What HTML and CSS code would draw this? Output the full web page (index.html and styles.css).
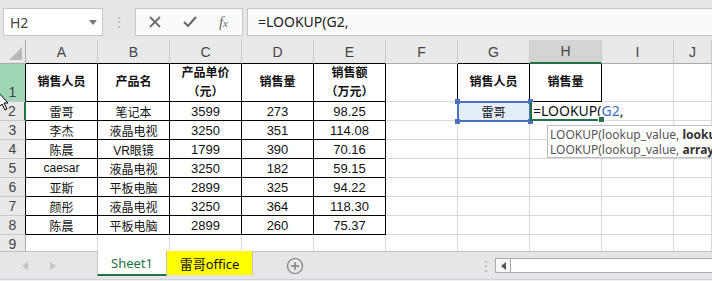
FILE: index.html
```html
<!DOCTYPE html>
<html lang="zh">
<head>
    <meta charset="UTF-8">
    <title>LOOKUP</title>
    <link rel="stylesheet" href="styles.css">
</head>
<body>
<div class="app">

    <!-- barre de formule -->
    <div class="formula-bar">
        <div class="name-box">
            <span>H2</span>
            <svg width="8" height="5" viewBox="0 0 8 5"><path d="M0 0h8L4 5z" fill="#7a7a7a"/></svg>
        </div>
        <div class="grip">&#8942;</div>
        <div class="fx-buttons">
            <svg width="12" height="12" viewBox="0 0 12 12"><path d="M1 1l10 10M11 1L1 11" stroke="#6b6b6b" stroke-width="1.8"/></svg>
            <svg width="14" height="12" viewBox="0 0 14 12"><path d="M1 6l4 4 8-9" stroke="#6b6b6b" stroke-width="2.2" fill="none"/></svg>
            <span class="fx">f<i>x</i></span>
        </div>
        <div class="formula-input">=LOOKUP(G2,</div>
    </div>

    <!-- feuille -->
    <div class="sheet">
        <div class="grid">
            <div class="corner"></div>
            <div class="hd tb">A</div>
            <div class="hd tb">B</div>
            <div class="hd tb">C</div>
            <div class="hd tb">D</div>
            <div class="hd tb">E</div>
            <div class="hd">F</div>
            <div class="hd tb">G</div>
            <div class="hd on">H</div>
            <div class="hd">I</div>
            <div class="hd">J</div>

            <div class="rh tl r1">1</div>
            <div class="t b z">销售人员</div>
            <div class="t b z">产品名</div>
            <div class="t b z"><span>产品单价</span><span>（元）</span></div>
            <div class="t b z">销售量</div>
            <div class="t b z"><span>销售额</span><span>（万元）</span></div>
            <div class="rb"></div>
            <div class="t b z">销售人员</div>
            <div class="t b z">销售量</div>
            <div></div>
            <div></div>

            <div class="rh tl act">2</div>
            <div class="t z">雷哥</div>
            <div class="t z">笔记本</div>
            <div class="t">3599</div>
            <div class="t">273</div>
            <div class="t">98.25</div>
            <div></div>
            <div class="ref z">雷哥<span class="sq s1"></span><span class="sq s2"></span><span class="sq s3"></span><span class="sq s4"></span></div>
            <div class="edit"><span>=LOOKUP(<em>G2</em>,</span></div>
            <div></div>
            <div></div>

            <div class="rh tl">3</div>
            <div class="t z">李杰</div>
            <div class="t z">液晶电视</div>
            <div class="t">3250</div>
            <div class="t">351</div>
            <div class="t">114.08</div>
            <div></div><div></div><div></div><div></div><div></div>

            <div class="rh tl">4</div>
            <div class="t z">陈晨</div>
            <div class="t z">VR眼镜</div>
            <div class="t">1799</div>
            <div class="t">390</div>
            <div class="t">70.16</div>
            <div></div><div></div><div></div><div></div><div></div>

            <div class="rh tl">5</div>
            <div class="t z">caesar</div>
            <div class="t z">液晶电视</div>
            <div class="t">3250</div>
            <div class="t">182</div>
            <div class="t">59.15</div>
            <div></div><div></div><div></div><div></div><div></div>

            <div class="rh tl">6</div>
            <div class="t z">亚斯</div>
            <div class="t z">平板电脑</div>
            <div class="t">2899</div>
            <div class="t">325</div>
            <div class="t">94.22</div>
            <div></div><div></div><div></div><div></div><div></div>

            <div class="rh tl">7</div>
            <div class="t z">颜彤</div>
            <div class="t z">液晶电视</div>
            <div class="t">3250</div>
            <div class="t">364</div>
            <div class="t">118.30</div>
            <div></div><div></div><div></div><div></div><div></div>

            <div class="rh tl">8</div>
            <div class="t z">陈晨</div>
            <div class="t z">平板电脑</div>
            <div class="t">2899</div>
            <div class="t">260</div>
            <div class="t">75.37</div>
            <div></div><div></div><div></div><div></div><div></div>

            <div class="rh">9</div>
            <div></div><div></div><div></div><div></div><div></div>
            <div></div><div></div><div></div><div></div><div></div>
        </div>

        <div class="tip">
            <div>LOOKUP(lookup_value, <b>lookup_vector</b>, [result_vector])</div>
            <div>LOOKUP(lookup_value, <b>array</b>)</div>
        </div>

        <svg class="cursor" width="12" height="20" viewBox="0 0 12 20"><path d="M1 1v14l3-3 3 6 2-1-3-6h4z" fill="#fff" stroke="#000" stroke-width="1"/></svg>
    </div>

    <!-- onglets -->
    <div class="tabs">
        <div class="nav">
            <svg width="6" height="8" viewBox="0 0 6 8"><path d="M6 0v8L0 4z" fill="#c4c4c4"/></svg>
            <svg width="6" height="8" viewBox="0 0 6 8"><path d="M0 0v8l6-4z" fill="#c4c4c4"/></svg>
        </div>
        <div class="tab active">Sheet1</div>
        <div class="tab yellow">雷哥office</div>
        <div class="add">
            <svg width="18" height="18" viewBox="0 0 18 18"><circle cx="9" cy="9" r="7.5" fill="none" stroke="#7d7d7d" stroke-width="1.2"/><path d="M9 5v8M5 9h8" stroke="#7d7d7d" stroke-width="1.4"/></svg>
        </div>
        <div class="dots">&#8942;</div>
        <div class="scroll-left">
            <svg width="5" height="8" viewBox="0 0 5 8"><path d="M5 0v8L0 4z" fill="#555"/></svg>
        </div>
        <div class="scroll-track"></div>
    </div>

</div>
</body>
</html>
```

FILE: styles.css
```css
body {
    margin: 0;
    padding: 0;
    background-color: #fff;
}
.app {
    width: 712px;
    height: 281px;
    overflow: hidden;
    position: relative;
    font-family: "Noto Sans", "Noto Sans CJK SC", sans-serif;
    background-color: #f0f0f0;
}
/* barre de formule */
.formula-bar {
    height: 40px;
    box-sizing: border-box;
    padding: 8px 0 0 3px;
    background-color: #e6e6e6;
    display: flex;
    align-items: flex-start;
}
.name-box {
    width: 100px;
    height: 28px;
    box-sizing: border-box;
    border: 1px solid #c6c6c6;
    background-color: #fff;
    display: flex;
    align-items: center;
    justify-content: space-between;
    padding: 0 5px 0 6px;
    font-size: 14px;
    color: #444;
}
.grip {
    width: 32px;
    text-align: center;
    line-height: 28px;
    color: #b5b5b5;
    font-size: 14px;
}
.fx-buttons {
    width: 108px;
    height: 28px;
    box-sizing: border-box;
    border: 1px solid #c6c6c6;
    background-color: #fafafa;
    display: flex;
    align-items: center;
    justify-content: space-between;
    padding: 0 14px 0 13px;
}
.fx {
    font-family: "Liberation Serif", serif;
    font-style: italic;
    font-size: 15px;
    color: #666;
}
.fx i {
    font-size: 11px;
}
.formula-input {
    flex: 1;
    height: 28px;
    margin-left: 4px;
    box-sizing: border-box;
    border: 1px solid #c6c6c6;
    border-right: none;
    background-color: #fafafa;
    padding-left: 10px;
    font-size: 14px;
    line-height: 25px;
    color: #222;
}
/* feuille */
.sheet {
    position: relative;
    height: 211px;
    overflow: hidden;
    background-color: #fff;
}
.grid {
    display: grid;
    grid-template-columns: 26px repeat(9, 72px) 1fr;
    grid-template-rows: 24px 38px repeat(8, 19px);
    font-family: "Liberation Sans", "Noto Sans CJK SC", sans-serif;
    font-size: 13px;
    color: #111;
}
.grid > div {
    box-sizing: border-box;
    border-right: 1px solid #d9d9d9;
    border-bottom: 1px solid #d9d9d9;
    display: flex;
    align-items: center;
    justify-content: center;
    white-space: nowrap;
}
.corner {
    background-color: #e9e9e9;
    border-right-color: #ababab !important;
    border-bottom-color: #ababab !important;
    align-items: flex-end !important;
    justify-content: flex-end !important;
    padding: 0 3px 3px 0;
}
.corner::after {
    content: "";
    border-style: solid;
    border-width: 0 0 13px 13px;
    border-color: transparent transparent #b8b8b8 transparent;
}
.hd {
    background-color: #e9e9e9;
    border-right-color: #c9c9c9 !important;
    border-bottom-color: #ababab !important;
    font-size: 14px;
    color: #444;
}
.hd.tb {
    border-bottom-color: #000 !important;
}
.hd.on {
    background-color: #d4d4d4;
    border-bottom: 2px solid #217346 !important;
}
.rh {
    background-color: #e9e9e9;
    border-right-color: #ababab !important;
    border-bottom-color: #c9c9c9 !important;
    align-items: flex-end !important;
    font-size: 14px;
    line-height: 17px;
    color: #444;
}
.rh.tl {
    border-right-color: #000 !important;
}
.rh.r1 {
    background-color: #9fd5b7;
}
.rh.act {
    border-right: 2px solid #217346 !important;
}
.t {
    border-right-color: #000 !important;
    border-bottom-color: #000 !important;
}
.rb {
    border-right-color: #000 !important;
}
.z {
    font-size: 12px;
}
.b {
    font-weight: bold;
    flex-direction: column;
    line-height: 19px;
}
/* G2 : référence en bleu */
.ref {
    position: relative;
    background-color: #e4eef9;
}
.ref::before {
    content: "";
    position: absolute;
    left: -1px;
    top: -1px;
    right: -2px;
    bottom: -2px;
    border: 2px solid #4a72c0;
}
.sq {
    position: absolute;
    width: 5px;
    height: 5px;
    background-color: #4a72c0;
}
.s1 { left: -3px; top: -3px; }
.s2 { right: -4px; top: -3px; }
.s3 { left: -3px; bottom: -4px; }
.s4 { right: -4px; bottom: -4px; }
/* H2 : cellule en édition */
.edit {
    position: relative;
    z-index: 1;
    justify-content: flex-start !important;
    border-left: 2px solid #217346;
    border-bottom: 2px solid #217346 !important;
    border-right: none !important;
}
.edit span {
    background-color: #fff;
    font-family: "Noto Sans", sans-serif;
    font-size: 14px;
    line-height: 17px;
    padding: 0 3px 0 1px;
    color: #111;
}
.edit em {
    font-style: normal;
    color: #3e6fc4;
}
.edit::after {
    content: "";
    position: absolute;
    right: -3px;
    bottom: -4px;
    width: 5px;
    height: 5px;
    background-color: #217346;
    border: 1px solid #fff;
}
.tip {
    position: absolute;
    left: 547px;
    top: 85px;
    z-index: 3;
    height: 33px;
    box-sizing: border-box;
    border: 1px solid #bdbdbd;
    background-color: #fff;
    padding: 1px 6px 0 2px;
    font-size: 12px;
    line-height: 15px;
    color: #555;
    white-space: nowrap;
}
.tip b {
    color: #333;
}
.cursor {
    position: absolute;
    left: -2px;
    top: 52px;
}
/* onglets */
.tabs {
    height: 29px;
    box-sizing: border-box;
    background-color: #e6e6e6;
    border-top: 1px solid #bfbfbf;
    border-bottom: 1px solid #d2d0dc;
    display: flex;
    align-items: flex-start;
}
.nav {
    width: 97px;
    height: 27px;
    display: flex;
    align-items: center;
    gap: 22px;
    padding-left: 22px;
    box-sizing: border-box;
}
.tab {
    height: 25px;
    margin-top: -1px;
    box-sizing: border-box;
    display: flex;
    align-items: center;
    justify-content: center;
    font-size: 13px;
}
.tab.active {
    width: 70px;
    background-color: #fff;
    border-left: 1px solid #c6c6c6;
    border-right: 1px solid #c6c6c6;
    border-bottom: 2px solid #217346;
    color: #217346;
}
.tab.yellow {
    width: 86px;
    height: 24px;
    background-color: #ffff00;
    border-right: 1px solid #c6c6c6;
    color: #111;
}
.add {
    margin: 5px 0 0 33px;
    height: 18px;
}
.dots {
    margin-left: 175px;
    width: 12px;
    line-height: 27px;
    color: #b5b5b5;
    font-size: 14px;
}
.scroll-left {
    margin: 6px 0 0 4px;
    width: 16px;
    height: 15px;
    box-sizing: border-box;
    border: 1px solid #ababab;
    background-color: #f7f7f7;
    display: flex;
    align-items: center;
    justify-content: center;
}
.scroll-track {
    flex: 1;
    margin-top: 6px;
    height: 15px;
    box-sizing: border-box;
    border: 1px solid #ababab;
    border-left: none;
    border-right: none;
    background-color: #fff;
}
```
